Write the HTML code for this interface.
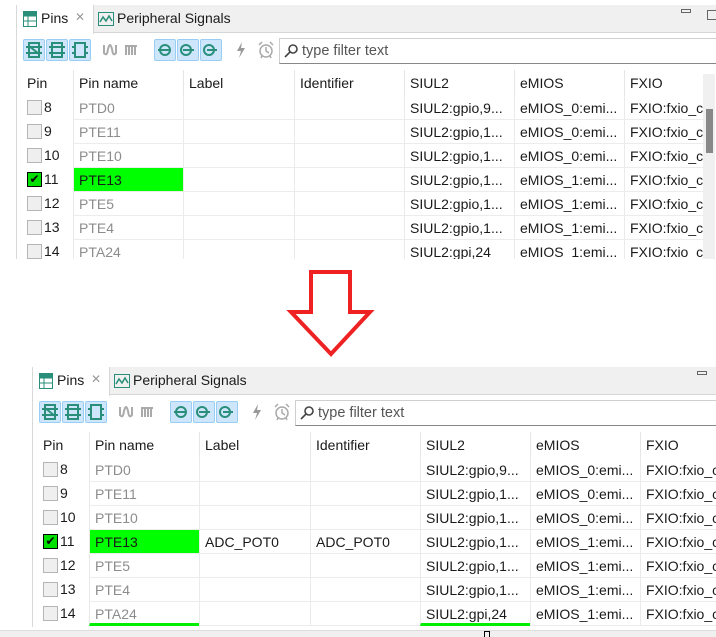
<!DOCTYPE html>
<html><head><meta charset="utf-8"><style>
*{margin:0;padding:0;box-sizing:border-box}
body{width:716px;height:637px;background:#fff;position:relative;overflow:hidden;font-family:"Liberation Sans",sans-serif;font-size:14px;color:#1a1a1a}
.p{position:absolute;overflow:hidden;background:#fff;border-left:1px solid #d8d8d8}
.tb{position:absolute;left:0;top:0;right:0;height:28px;background:#f0f0f0;border-bottom:1px solid #d6d6d6}
.tab{position:absolute;left:0;top:0;width:77px;height:29px;background:#fff;border-right:1px solid #d6d6d6}
.a{position:absolute;white-space:nowrap}
.hd{position:absolute;top:65px;height:26px;line-height:26px;padding-left:5px;border-left:1px solid #e6e6e6}
.c{position:absolute;height:24px;line-height:24px;padding-left:5px;white-space:nowrap;overflow:hidden;border-left:1px solid #eaeaea;border-bottom:1px solid #ececec}
.g{color:#8c8c8c}
.cb{position:absolute;width:15px;height:15px;background:#efefef;border:1px solid #b5b5b5}
.btn{position:absolute;top:34px;width:22px;height:22px;background:#cde6fb;border:1px solid #99cdf3;border-radius:2px}
.flt{position:absolute;top:33px;height:26px;border:1px solid #cfcfcf;border-bottom:1px solid #888;background:#fff;color:#555;line-height:24px;padding-left:22px;font-size:14.5px}
</style></head><body>

<!-- Panel 1 -->
<div class="p" style="left:16px;top:5px;width:700px;height:254px">
 <div class="tb"></div><div class="tab"></div>
 <svg class="a" style="left:6px;top:6px" width="14" height="16"><rect x="0.5" y="0.5" width="13" height="15" fill="none" stroke="#2a8f7a"/><path d="M0 5H14M0 10H14M5 0V16" stroke="#2a8f7a"/><rect x="0" y="0" width="14" height="5" fill="#2a8f7a"/></svg>
 <div class="a" style="left:24px;top:5px">Pins</div>
 <div class="a" style="left:58px;top:5px;color:#999;font-size:12px">✕</div>
 <svg class="a" style="left:81px;top:7px" width="16" height="14"><rect x="0.5" y="0.5" width="15" height="13" fill="none" stroke="#2a8f7a"/><path d="M2 10L5 5L8 9L11 4L14 9" fill="none" stroke="#2a8f7a" stroke-width="1.5"/></svg>
 <div class="a" style="left:100px;top:5px">Peripheral Signals</div>
 <div class="a" style="left:664px;top:4px;width:10px;height:4px;border:1px solid #666"></div>
 <div class="a" style="left:690px;top:5px;width:10px;height:10px;border:1px solid #666"></div>
 <div class="btn" style="left:6px"></div><div class="btn" style="left:29px"></div><div class="btn" style="left:52px"></div>
 <svg class="a" style="left:9px;top:37px" width="64" height="16" fill="none" stroke="#2a8f7a" stroke-width="2"><rect x="3" y="1" width="10" height="14"/><path d="M0 5H16M0 11H16M3 4L13 12"/><rect x="26" y="1" width="10" height="14"/><path d="M23 5H39M23 11H39"/><rect x="49" y="1" width="10" height="14"/><path d="M46 5H49M46 11H49M59 5H62M59 11H62"/></svg>
 <svg class="a" style="left:86px;top:38px" width="40" height="14" fill="none" stroke="#aaa" stroke-width="2"><path d="M1 2V10Q4 14 5 6Q7 -2 9 6Q10 14 13 10V2"/><path d="M22 3H34M23 3V12M26 3V12M29 3V12M32 3V12"/></svg>
 <div class="btn" style="left:137px"></div><div class="btn" style="left:160px"></div><div class="btn" style="left:183px"></div>
 <svg class="a" style="left:140px;top:38px" width="64" height="14" fill="none" stroke="#2a8f7a" stroke-width="2"><circle cx="8" cy="7" r="5"/><path d="M1 7H12"/><circle cx="29" cy="7" r="5"/><path d="M26 7H37"/><circle cx="52" cy="7" r="5"/><path d="M50 7H60"/></svg>
 <svg class="a" style="left:219px;top:37px" width="10" height="16"><path d="M6 0L1 9H5L3 16L9 6H5Z" fill="#999"/></svg>
 <svg class="a" style="left:240px;top:36px" width="18" height="18" fill="none" stroke="#aaa" stroke-width="1.5"><circle cx="9" cy="10" r="6"/><path d="M9 6V10L12 12M2 4L5 1M16 4L13 1M4 17L5 15M14 17L13 15"/></svg>
 <div class="flt" style="left:262px;width:440px">type filter text</div>
 <svg class="a" style="left:267px;top:39px" width="14" height="14" fill="none" stroke="#444" stroke-width="1.6"><circle cx="9" cy="5" r="4"/><path d="M6 8L1 13"/></svg>
 <div class="hd" style="left:0;border:0;padding-left:10px">Pin</div>
 <div class="hd" style="left:56px">Pin name</div><div class="hd" style="left:166px">Label</div><div class="hd" style="left:277px">Identifier</div>
 <div class="hd" style="left:387px">SIUL2</div><div class="hd" style="left:497px">eMIOS</div><div class="hd" style="left:607px">FXIO</div>
 <div class="a" style="left:686px;top:69px;width:12px;height:190px;background:#f0f0f0"></div>
 <div class="a" style="left:689px;top:104px;width:7px;height:44px;background:#888"></div>
 <div style="position:absolute;left:0;top:91px;width:686px">
  <div class="cb" style="left:10px;top:4px"></div><div class="a" style="left:27px;top:3px">8</div>
  <div class="c g" style="left:56px;top:0;width:110px">PTD0</div><div class="c" style="left:166px;top:0;width:111px"></div><div class="c" style="left:277px;top:0;width:110px"></div><div class="c" style="left:387px;top:0;width:110px">SIUL2:gpio,9...</div><div class="c" style="left:497px;top:0;width:110px">eMIOS_0:emi...</div><div class="c" style="left:607px;top:0;width:80px">FXIO:fxio_c</div>
  <div class="cb" style="left:10px;top:28px"></div><div class="a" style="left:27px;top:27px">9</div>
  <div class="c g" style="left:56px;top:24px;width:110px">PTE11</div><div class="c" style="left:166px;top:24px;width:111px"></div><div class="c" style="left:277px;top:24px;width:110px"></div><div class="c" style="left:387px;top:24px;width:110px">SIUL2:gpio,1...</div><div class="c" style="left:497px;top:24px;width:110px">eMIOS_0:emi...</div><div class="c" style="left:607px;top:24px;width:80px">FXIO:fxio_c</div>
  <div class="cb" style="left:10px;top:52px"></div><div class="a" style="left:27px;top:51px">10</div>
  <div class="c g" style="left:56px;top:48px;width:110px">PTE10</div><div class="c" style="left:166px;top:48px;width:111px"></div><div class="c" style="left:277px;top:48px;width:110px"></div><div class="c" style="left:387px;top:48px;width:110px">SIUL2:gpio,1...</div><div class="c" style="left:497px;top:48px;width:110px">eMIOS_0:emi...</div><div class="c" style="left:607px;top:48px;width:80px">FXIO:fxio_c</div>
  <div class="cb" style="left:10px;top:76px;background:#00e000;border-color:#000;color:#000;font-size:12px;line-height:12px;text-align:center">✔</div><div class="a" style="left:27px;top:75px">11</div>
  <div class="c" style="left:56px;top:72px;width:110px;background:#00ff00">PTE13</div><div class="c" style="left:166px;top:72px;width:111px"></div><div class="c" style="left:277px;top:72px;width:110px"></div><div class="c" style="left:387px;top:72px;width:110px">SIUL2:gpio,1...</div><div class="c" style="left:497px;top:72px;width:110px">eMIOS_1:emi...</div><div class="c" style="left:607px;top:72px;width:80px">FXIO:fxio_c</div>
  <div class="cb" style="left:10px;top:100px"></div><div class="a" style="left:27px;top:99px">12</div>
  <div class="c g" style="left:56px;top:96px;width:110px">PTE5</div><div class="c" style="left:166px;top:96px;width:111px"></div><div class="c" style="left:277px;top:96px;width:110px"></div><div class="c" style="left:387px;top:96px;width:110px">SIUL2:gpio,1...</div><div class="c" style="left:497px;top:96px;width:110px">eMIOS_1:emi...</div><div class="c" style="left:607px;top:96px;width:80px">FXIO:fxio_c</div>
  <div class="cb" style="left:10px;top:124px"></div><div class="a" style="left:27px;top:123px">13</div>
  <div class="c g" style="left:56px;top:120px;width:110px">PTE4</div><div class="c" style="left:166px;top:120px;width:111px"></div><div class="c" style="left:277px;top:120px;width:110px"></div><div class="c" style="left:387px;top:120px;width:110px">SIUL2:gpio,1...</div><div class="c" style="left:497px;top:120px;width:110px">eMIOS_1:emi...</div><div class="c" style="left:607px;top:120px;width:80px">FXIO:fxio_c</div>
  <div class="cb" style="left:10px;top:148px"></div><div class="a" style="left:27px;top:147px">14</div>
  <div class="c g" style="left:56px;top:144px;width:110px">PTA24</div><div class="c" style="left:166px;top:144px;width:111px"></div><div class="c" style="left:277px;top:144px;width:110px"></div><div class="c" style="left:387px;top:144px;width:110px">SIUL2:gpi,24</div><div class="c" style="left:497px;top:144px;width:110px">eMIOS_1:emi...</div><div class="c" style="left:607px;top:144px;width:80px">FXIO:fxio_c</div>
 </div>
</div>

<svg style="position:absolute;left:285px;top:268px" width="92" height="92"><path d="M26 4H65V44H85L46 86L6 44H26Z" fill="none" stroke="#ee2222" stroke-width="4"/></svg>

<!-- Panel 2 -->
<div class="p" style="left:32px;top:367px;width:684px;height:260px">
 <div class="tb"></div><div class="tab"></div>
 <svg class="a" style="left:6px;top:6px" width="14" height="16"><rect x="0.5" y="0.5" width="13" height="15" fill="none" stroke="#2a8f7a"/><path d="M0 5H14M0 10H14M5 0V16" stroke="#2a8f7a"/><rect x="0" y="0" width="14" height="5" fill="#2a8f7a"/></svg>
 <div class="a" style="left:24px;top:5px">Pins</div>
 <div class="a" style="left:58px;top:5px;color:#999;font-size:12px">✕</div>
 <svg class="a" style="left:81px;top:7px" width="16" height="14"><rect x="0.5" y="0.5" width="15" height="13" fill="none" stroke="#2a8f7a"/><path d="M2 10L5 5L8 9L11 4L14 9" fill="none" stroke="#2a8f7a" stroke-width="1.5"/></svg>
 <div class="a" style="left:100px;top:5px">Peripheral Signals</div>
 <div class="a" style="left:664px;top:4px;width:10px;height:4px;border:1px solid #666"></div>
 <div class="btn" style="left:6px"></div><div class="btn" style="left:29px"></div><div class="btn" style="left:52px"></div>
 <svg class="a" style="left:9px;top:37px" width="64" height="16" fill="none" stroke="#2a8f7a" stroke-width="2"><rect x="3" y="1" width="10" height="14"/><path d="M0 5H16M0 11H16M3 4L13 12"/><rect x="26" y="1" width="10" height="14"/><path d="M23 5H39M23 11H39"/><rect x="49" y="1" width="10" height="14"/><path d="M46 5H49M46 11H49M59 5H62M59 11H62"/></svg>
 <svg class="a" style="left:86px;top:38px" width="40" height="14" fill="none" stroke="#aaa" stroke-width="2"><path d="M1 2V10Q4 14 5 6Q7 -2 9 6Q10 14 13 10V2"/><path d="M22 3H34M23 3V12M26 3V12M29 3V12M32 3V12"/></svg>
 <div class="btn" style="left:137px"></div><div class="btn" style="left:160px"></div><div class="btn" style="left:183px"></div>
 <svg class="a" style="left:140px;top:38px" width="64" height="14" fill="none" stroke="#2a8f7a" stroke-width="2"><circle cx="8" cy="7" r="5"/><path d="M1 7H12"/><circle cx="29" cy="7" r="5"/><path d="M26 7H37"/><circle cx="52" cy="7" r="5"/><path d="M50 7H60"/></svg>
 <svg class="a" style="left:219px;top:37px" width="10" height="16"><path d="M6 0L1 9H5L3 16L9 6H5Z" fill="#999"/></svg>
 <svg class="a" style="left:240px;top:36px" width="18" height="18" fill="none" stroke="#aaa" stroke-width="1.5"><circle cx="9" cy="10" r="6"/><path d="M9 6V10L12 12M2 4L5 1M16 4L13 1M4 17L5 15M14 17L13 15"/></svg>
 <div class="flt" style="left:262px;width:430px">type filter text</div>
 <svg class="a" style="left:267px;top:39px" width="14" height="14" fill="none" stroke="#444" stroke-width="1.6"><circle cx="9" cy="5" r="4"/><path d="M6 8L1 13"/></svg>
 <div class="hd" style="left:0;border:0;padding-left:10px">Pin</div>
 <div class="hd" style="left:56px">Pin name</div><div class="hd" style="left:166px">Label</div><div class="hd" style="left:277px">Identifier</div>
 <div class="hd" style="left:387px">SIUL2</div><div class="hd" style="left:497px">eMIOS</div><div class="hd" style="left:607px">FXIO</div>
 <div style="position:absolute;left:0;top:91px;width:684px">
  <div class="cb" style="left:10px;top:4px"></div><div class="a" style="left:27px;top:3px">8</div>
  <div class="c g" style="left:56px;top:0;width:110px">PTD0</div><div class="c" style="left:166px;top:0;width:111px"></div><div class="c" style="left:277px;top:0;width:110px"></div><div class="c" style="left:387px;top:0;width:110px">SIUL2:gpio,9...</div><div class="c" style="left:497px;top:0;width:110px">eMIOS_0:emi...</div><div class="c" style="left:607px;top:0;width:80px">FXIO:fxio_c</div>
  <div class="cb" style="left:10px;top:28px"></div><div class="a" style="left:27px;top:27px">9</div>
  <div class="c g" style="left:56px;top:24px;width:110px">PTE11</div><div class="c" style="left:166px;top:24px;width:111px"></div><div class="c" style="left:277px;top:24px;width:110px"></div><div class="c" style="left:387px;top:24px;width:110px">SIUL2:gpio,1...</div><div class="c" style="left:497px;top:24px;width:110px">eMIOS_0:emi...</div><div class="c" style="left:607px;top:24px;width:80px">FXIO:fxio_c</div>
  <div class="cb" style="left:10px;top:52px"></div><div class="a" style="left:27px;top:51px">10</div>
  <div class="c g" style="left:56px;top:48px;width:110px">PTE10</div><div class="c" style="left:166px;top:48px;width:111px"></div><div class="c" style="left:277px;top:48px;width:110px"></div><div class="c" style="left:387px;top:48px;width:110px">SIUL2:gpio,1...</div><div class="c" style="left:497px;top:48px;width:110px">eMIOS_0:emi...</div><div class="c" style="left:607px;top:48px;width:80px">FXIO:fxio_c</div>
  <div class="cb" style="left:10px;top:76px;background:#00e000;border-color:#000;color:#000;font-size:12px;line-height:12px;text-align:center">✔</div><div class="a" style="left:27px;top:75px">11</div>
  <div class="c" style="left:56px;top:72px;width:110px;background:#00ff00">PTE13</div><div class="c" style="left:166px;top:72px;width:111px">ADC_POT0</div><div class="c" style="left:277px;top:72px;width:110px">ADC_POT0</div><div class="c" style="left:387px;top:72px;width:110px">SIUL2:gpio,1...</div><div class="c" style="left:497px;top:72px;width:110px">eMIOS_1:emi...</div><div class="c" style="left:607px;top:72px;width:80px">FXIO:fxio_c</div>
  <div class="cb" style="left:10px;top:100px"></div><div class="a" style="left:27px;top:99px">12</div>
  <div class="c g" style="left:56px;top:96px;width:110px">PTE5</div><div class="c" style="left:166px;top:96px;width:111px"></div><div class="c" style="left:277px;top:96px;width:110px"></div><div class="c" style="left:387px;top:96px;width:110px">SIUL2:gpio,1...</div><div class="c" style="left:497px;top:96px;width:110px">eMIOS_1:emi...</div><div class="c" style="left:607px;top:96px;width:80px">FXIO:fxio_c</div>
  <div class="cb" style="left:10px;top:124px"></div><div class="a" style="left:27px;top:123px">13</div>
  <div class="c g" style="left:56px;top:120px;width:110px">PTE4</div><div class="c" style="left:166px;top:120px;width:111px"></div><div class="c" style="left:277px;top:120px;width:110px"></div><div class="c" style="left:387px;top:120px;width:110px">SIUL2:gpio,1...</div><div class="c" style="left:497px;top:120px;width:110px">eMIOS_1:emi...</div><div class="c" style="left:607px;top:120px;width:80px">FXIO:fxio_c</div>
  <div class="cb" style="left:10px;top:148px"></div><div class="a" style="left:27px;top:147px">14</div>
  <div class="c g" style="left:56px;top:144px;width:110px;border-bottom:3px solid #00ee00">PTA24</div><div class="c" style="left:166px;top:144px;width:111px"></div><div class="c" style="left:277px;top:144px;width:110px"></div><div class="c" style="left:387px;top:144px;width:110px;border-bottom:3px solid #00ee00">SIUL2:gpi,24</div><div class="c" style="left:497px;top:144px;width:110px">eMIOS_1:emi...</div><div class="c" style="left:607px;top:144px;width:80px">FXIO:fxio_c</div>
 </div>
</div>
<div style="position:absolute;left:0;top:630px;width:716px;height:7px;background:#f0f0f0;border-top:1px solid #ddd"></div>
<div style="position:absolute;left:484px;top:631px;width:6px;height:6px;border:1px solid #000;border-bottom:0"></div>
</body></html>
